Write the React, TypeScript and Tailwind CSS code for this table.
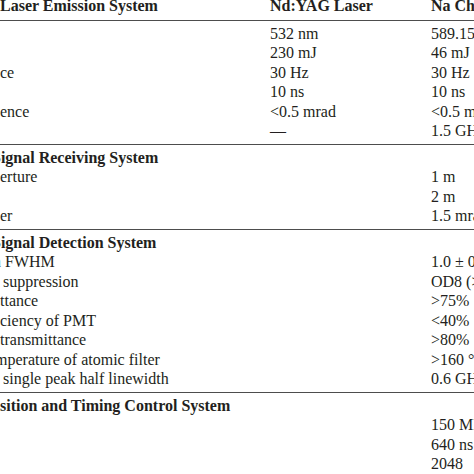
type Row = { label?: string; labelClass?: string; bold?: boolean; mid?: string; right?: string };

const sections: Row[][] = [
  [
    { label: '', mid: '532 nm', right: '589.158 nm' },
    { label: '', mid: '230 mJ', right: '46 mJ' },
    { label: 'ce', mid: '30 Hz', right: '30 Hz' },
    { label: '', mid: '10 ns', right: '10 ns' },
    { label: 'ence', mid: '<0.5 mrad', right: '<0.5 mrad' },
    { label: '', mid: '—', right: '1.5 GHz' },
  ],
  [
    { label: 'Signal Receiving System', labelClass: '-ml-[8px]', bold: true },
    { label: 'erture', right: '1 m' },
    { label: '', right: '2 m' },
    { label: 'er', right: '1.5 mrad' },
  ],
  [
    { label: 'Signal Detection System', labelClass: '-ml-[8px]', bold: true },
    { label: 'h FWHM', labelClass: '-ml-[7px]', right: '1.0 ± 0.1 GHz' },
    { label: 'suppression', labelClass: 'ml-[3px]', right: 'OD8 (>60 dB)' },
    { label: 'ttance', right: '>75%' },
    { label: 'ciency of PMT', right: '<40%' },
    { label: 'transmittance', right: '>80%' },
    { label: 'mperature of atomic filter', labelClass: '-ml-[5px]', right: '>160 °C' },
    { label: 'single peak half linewidth', labelClass: 'ml-[3px]', right: '0.6 GHz' },
  ],
  [
    { label: 'sition and Timing Control System', bold: true },
    { label: '', right: '150 MHz' },
    { label: '', right: '640 ns' },
    { label: '', right: '2048' },
  ],
];

const TableRow = ({ row }: { row: Row }) => (
  <div className="grid grid-cols-[270px_161px_1fr] h-[19.5px] leading-[19.5px] whitespace-nowrap">
    <div>
      <div className={`${row.labelClass ?? ''} ${row.bold ? 'font-bold' : ''}`}>{row.label}</div>
    </div>
    <div>{row.mid}</div>
    <div>{row.right}</div>
  </div>
);

export default function App() {
  return (
    <div
      className="w-[474px] h-[474px] overflow-hidden bg-white text-[16px] text-[#231f20]"
      style={{ fontFamily: '"Liberation Serif", "DejaVu Serif", serif' }}
    >
      <div className="-mt-[4px] pb-[4px] border-b-[1.5px] border-[#4d4d4d]">
        <div className="grid grid-cols-[270px_161px_1fr] h-[19.5px] leading-[19.5px] whitespace-nowrap font-bold">
          <div>Laser Emission System</div>
          <div>Nd:YAG Laser</div>
          <div>Na Channel</div>
        </div>
      </div>
      {sections.map((rows, i) => (
        <div
          key={i}
          className={`pt-[3px] pb-[3px] ${i < sections.length - 1 ? 'border-b-[1.5px] border-[#4d4d4d]' : ''}`}
        >
          {rows.map((row, j) => (
            <TableRow key={j} row={row} />
          ))}
        </div>
      ))}
    </div>
  );
}
